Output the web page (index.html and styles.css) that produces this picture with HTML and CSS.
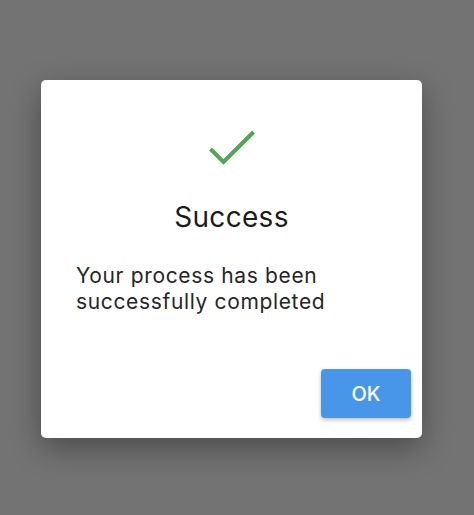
FILE: index.html
```html
<!DOCTYPE html>
<html lang="en">

<head>
  <meta charset="UTF-8">
  <meta name="viewport" content="width=device-width, initial-scale=1.0">
  <title>Success</title>
  <link rel="stylesheet" href="styles.css">
</head>

<body>
  <div class="overlay">
    <div class="dialog">
      <div class="dialog_icon">
        <svg width="50" height="40" viewBox="0 0 50 40">
          <polyline points="3.5,22 16.5,35 46.5,5" fill="none" stroke="#4fa84f" stroke-width="4" />
        </svg>
      </div>
      <h2 class="dialog_title">Success</h2>
      <p class="dialog_text">Your process has been successfully completed</p>
      <div class="dialog_actions">
        <button class="btn_ok">OK</button>
      </div>
    </div>
  </div>
</body>

</html>
```

FILE: styles.css
```css
* {
  box-sizing: border-box;
}

html,
body {
  margin: 0;
  height: 100%;
}

body {
  background: #737373;
  font-family: Inter, Roboto, "Liberation Sans", sans-serif;
}

.overlay {
  padding: 80px 0 0 41px;
}

/* 弹窗 */
.dialog {
  width: 381px;
  height: 358px;
  background: #fff;
  border-radius: 5px;
  box-shadow: 0 10px 30px rgba(0, 0, 0, .35);
  display: flex;
  flex-direction: column;
  padding: 47px 11px 20px 35px;
}

.dialog_icon {
  display: flex;
  justify-content: center;
  margin-left: -24px;
  height: 40px;
}

.dialog_icon svg {
  display: block;
}

.dialog_title {
  margin: 33px 0 0 -24px;
  text-align: center;
  font-size: 28px;
  line-height: 34px;
  font-weight: 400;
  letter-spacing: .3px;
  color: #1c1c1c;
}

.dialog_text {
  margin: 29px 0 0;
  font-size: 21px;
  line-height: 26px;
  letter-spacing: .65px;
  color: #262626;
  width: 295px;
}

.dialog_actions {
  margin-top: auto;
  display: flex;
  justify-content: flex-end;
}

.btn_ok {
  width: 90px;
  height: 49px;
  border: none;
  border-radius: 4px;
  background: #4896ea;
  color: #fff;
  font-family: inherit;
  font-size: 20px;
  font-weight: 500;
  box-shadow: 0 2px 4px rgba(0, 0, 0, .25);
}
```
